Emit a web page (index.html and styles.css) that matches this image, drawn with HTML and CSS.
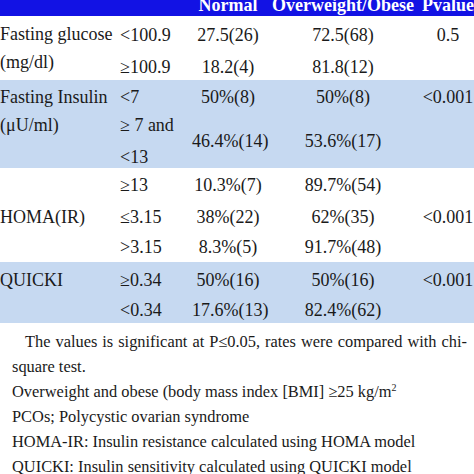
FILE: index.html
```html
<!DOCTYPE html>
<html lang="en">
<head>
<meta charset="utf-8">
<title>Table</title>
<link rel="stylesheet" href="styles.css">
</head>
<body>
<table class="stats">
  <colgroup>
    <col class="c-label"><col class="c-range"><col class="c-normal"><col class="c-obese"><col class="c-p">
  </colgroup>
  <thead>
    <tr class="head">
      <th></th><th></th><th>Normal</th><th>Overweight/Obese</th><th>Pvalue</th>
    </tr>
  </thead>
  <tbody>
    <tr class="r-a">
      <td class="label" rowspan="2">Fasting glucose<br>(mg/dl)</td>
      <td class="range">&lt;100.9</td><td>27.5(26)</td><td>72.5(68)</td><td>0.5</td>
    </tr>
    <tr class="r-b">
      <td class="range">&ge;100.9</td><td>18.2(4)</td><td>81.8(12)</td><td></td>
    </tr>
    <tr class="band r-c">
      <td class="label label-top" rowspan="2">Fasting Insulin<br>(&mu;U/ml)</td>
      <td class="range">&lt;7</td><td>50%(8)</td><td>50%(8)</td><td>&lt;0.001</td>
    </tr>
    <tr class="band r-d">
      <td class="range"><div class="stack">&ge; 7 and<br>&lt;13</div></td><td>46.4%(14)</td><td>53.6%(17)</td><td></td>
    </tr>
    <tr class="r-e">
      <td></td><td class="range">&ge;13</td><td>10.3%(7)</td><td>89.7%(54)</td><td></td>
    </tr>
    <tr class="r-f">
      <td class="label">HOMA(IR)</td><td class="range">&le;3.15</td><td>38%(22)</td><td>62%(35)</td><td>&lt;0.001</td>
    </tr>
    <tr class="r-g">
      <td></td><td class="range">&gt;3.15</td><td>8.3%(5)</td><td>91.7%(48)</td><td></td>
    </tr>
    <tr class="band r-h">
      <td class="label">QUICKI</td><td class="range">&ge;0.34</td><td>50%(16)</td><td>50%(16)</td><td>&lt;0.001</td>
    </tr>
    <tr class="band r-i">
      <td></td><td class="range">&lt;0.34</td><td>17.6%(13)</td><td>82.4%(62)</td><td></td>
    </tr>
  </tbody>
</table>
<div class="notes">
  <p class="first">The values is significant at P&le;0.05, rates were compared with chi-square test.</p>
  <p>Overweight and obese (body mass index [BMI] &ge;25 kg/m<sup>2</sup></p>
  <p>PCOs; Polycystic ovarian syndrome</p>
  <p>HOMA-IR: Insulin resistance calculated using HOMA model</p>
  <p>QUICKI: Insulin sensitivity calculated using QUICKI model</p>
</div>
</body>
</html>
```

FILE: styles.css
```css
html, body {
  margin: 0;
  padding: 0;
  background: #ffffff;
  overflow: hidden;
}

body {
  font-family: "Liberation Serif", "Times New Roman", serif;
  color: #1a1a1a;
  width: 474px;
  height: 474px;
}

.stats {
  width: 474px;
  table-layout: fixed;
  border-collapse: collapse;
  border-spacing: 0;
  margin-top: -6px;
  font-size: 18px;
}

.c-label { width: 120px; }
.c-range { width: 72px; }
.c-normal { width: 72px; }
.c-obese { width: 158px; }
.c-p { width: 52px; }

.stats th,
.stats td {
  padding: 0;
  line-height: 22px;
  text-align: center;
  vertical-align: middle;
  white-space: nowrap;
}

.head th {
  background: #1212e4;
  color: #ffffff;
  font-weight: bold;
  height: 22px;
}

.stats td.label {
  text-align: left;
  line-height: 28px;
}

.stats td.label-top {
  vertical-align: top;
  padding-top: 3px;
}

.stats td.range {
  text-align: left;
}

.stack {
  line-height: 32px;
  margin: -5px 0;
}

.band td {
  background: #c6d9f1;
}

.r-a td { height: 38px; }
.r-b td { height: 26px; }
.r-c td { height: 34px; }
.r-d td { height: 54px; }
.r-e td { height: 34px; }
.r-f td { height: 30px; }
.r-g td { height: 30px; }
.r-h td { height: 35px; }
.r-i td { height: 26px; }

.notes {
  padding: 6px 7px 0 12px;
  font-size: 16.4px;
  line-height: 25px;
}

.notes p {
  margin: 0;
}

.notes p.first {
  text-indent: 13px;
  text-align: justify;
}

.notes sup {
  font-size: 10px;
  line-height: 0;
  vertical-align: 6px;
}
```
